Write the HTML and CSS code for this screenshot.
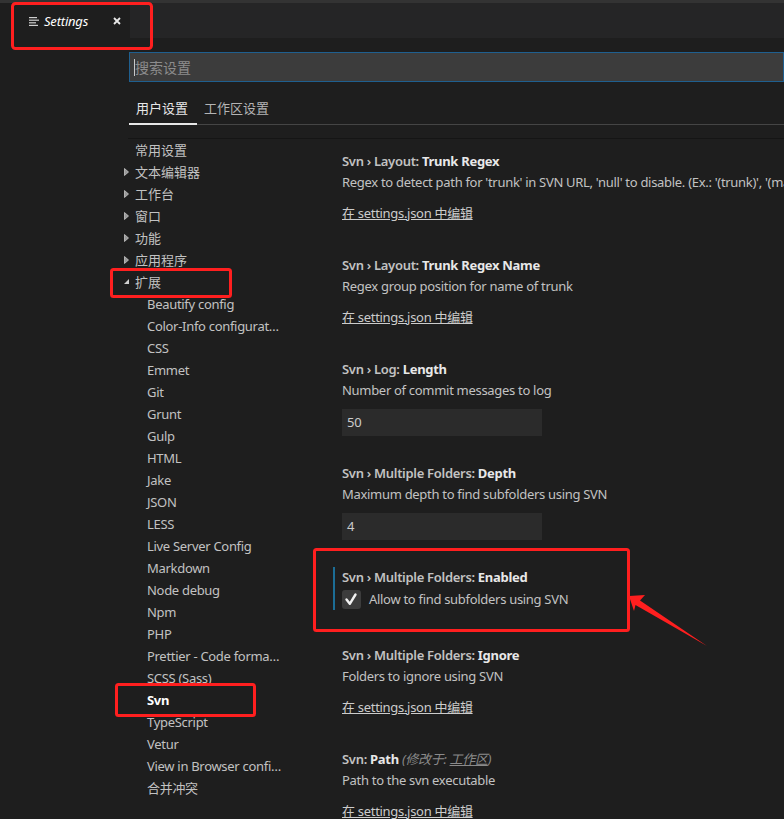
FILE: index.html
```html
<!DOCTYPE html>
<html lang="zh">
<head>
<meta charset="utf-8">
<title>Settings</title>
<link rel="stylesheet" href="styles.css">
</head>
<body>
<div class="page">
  <div class="topstrip"></div>
  <div class="tabbar">
    <div class="tab">
      <svg class="tab-icon" width="10" height="9" viewBox="0 0 10 9"><rect x="0" y="0" width="8" height="1.2" fill="#cfcfcf"/><rect x="0" y="2.6" width="10" height="1.2" fill="#cfcfcf"/><rect x="0" y="5.2" width="7" height="1.2" fill="#cfcfcf"/><rect x="0" y="7.8" width="9" height="1.2" fill="#cfcfcf"/></svg>
      <span class="tab-title">Settings</span>
      <svg class="tab-close" width="8" height="8" viewBox="0 0 8 8"><path d="M1 1 L7 7 M7 1 L1 7" stroke="#e8e8e8" stroke-width="1.8"/></svg>
    </div>
  </div>
  <div class="editor">
    <div class="header">
      <div class="search"><span class="caret"></span><span class="placeholder">搜索设置</span></div>
      <div class="scopes">
        <span class="scope active">用户设置</span>
        <span class="scope">工作区设置</span>
      </div>
    </div>
    <div class="shadow"></div>
    <div class="body">
      <ul class="tree">
        <li class="row top leaf">常用设置</li>
        <li class="row top"><svg class="chev" width="5" height="8" viewBox="0 0 5 8"><path d="M0.5 0.5 L4.5 4 L0.5 7.5 Z" fill="#9a9a9a" stroke="#c5c5c5" stroke-width="0.8"/></svg>文本编辑器</li>
        <li class="row top"><svg class="chev" width="5" height="8" viewBox="0 0 5 8"><path d="M0.5 0.5 L4.5 4 L0.5 7.5 Z" fill="#9a9a9a" stroke="#c5c5c5" stroke-width="0.8"/></svg>工作台</li>
        <li class="row top"><svg class="chev" width="5" height="8" viewBox="0 0 5 8"><path d="M0.5 0.5 L4.5 4 L0.5 7.5 Z" fill="#9a9a9a" stroke="#c5c5c5" stroke-width="0.8"/></svg>窗口</li>
        <li class="row top"><svg class="chev" width="5" height="8" viewBox="0 0 5 8"><path d="M0.5 0.5 L4.5 4 L0.5 7.5 Z" fill="#9a9a9a" stroke="#c5c5c5" stroke-width="0.8"/></svg>功能</li>
        <li class="row top"><svg class="chev" width="5" height="8" viewBox="0 0 5 8"><path d="M0.5 0.5 L4.5 4 L0.5 7.5 Z" fill="#9a9a9a" stroke="#c5c5c5" stroke-width="0.8"/></svg>应用程序</li>
        <li class="row top"><svg class="chev" width="5" height="8" viewBox="0 0 5 8"><path d="M5 1 L5 6 L0 6 Z" fill="#d0d0d0"/></svg>扩展</li>
        <li class="row child">Beautify config</li>
        <li class="row child">Color-Info configuration</li>
        <li class="row child">CSS</li>
        <li class="row child">Emmet</li>
        <li class="row child">Git</li>
        <li class="row child">Grunt</li>
        <li class="row child">Gulp</li>
        <li class="row child">HTML</li>
        <li class="row child">Jake</li>
        <li class="row child">JSON</li>
        <li class="row child">LESS</li>
        <li class="row child">Live Server Config</li>
        <li class="row child">Markdown</li>
        <li class="row child">Node debug</li>
        <li class="row child">Npm</li>
        <li class="row child">PHP</li>
        <li class="row child">Prettier - Code formatter</li>
        <li class="row child">SCSS (Sass)</li>
        <li class="row child selected">Svn</li>
        <li class="row child">TypeScript</li>
        <li class="row child">Vetur</li>
        <li class="row child">View in Browser configuration</li>
        <li class="row child">合并冲突</li>
      </ul>
      <div class="settings">
        <section class="setting">
          <div class="s-title"><span class="cat">Svn › Layout: </span><span class="key">Trunk Regex</span></div>
          <div class="s-desc">Regex to detect path for 'trunk' in SVN URL, 'null' to disable. (Ex.: '(trunk)', '(main)')</div>
          <a class="s-link">在 settings.json 中编辑</a>
        </section>
        <section class="setting">
          <div class="s-title"><span class="cat">Svn › Layout: </span><span class="key">Trunk Regex Name</span></div>
          <div class="s-desc">Regex group position for name of trunk</div>
          <a class="s-link">在 settings.json 中编辑</a>
        </section>
        <section class="setting">
          <div class="s-title"><span class="cat">Svn › Log: </span><span class="key">Length</span></div>
          <div class="s-desc">Number of commit messages to log</div>
          <div class="s-input">50</div>
        </section>
        <section class="setting">
          <div class="s-title"><span class="cat">Svn › Multiple Folders: </span><span class="key">Depth</span></div>
          <div class="s-desc">Maximum depth to find subfolders using SVN</div>
          <div class="s-input">4</div>
        </section>
        <section class="setting check-setting">
          <div class="modified">
            <div class="s-title"><span class="cat">Svn › Multiple Folders: </span><span class="key">Enabled</span></div>
            <div class="check-row">
              <span class="checkbox"><svg width="19" height="19" viewBox="0 0 19 19"><path d="M4.5 9.5 L7.8 13.8 L13.5 4.5" fill="none" stroke="#f2f2f2" stroke-width="2.4" stroke-linecap="round" stroke-linejoin="round"/></svg></span>
              <span class="s-desc">Allow to find subfolders using SVN</span>
            </div>
          </div>
        </section>
        <section class="setting">
          <div class="s-title"><span class="cat">Svn › Multiple Folders: </span><span class="key">Ignore</span></div>
          <div class="s-desc">Folders to ignore using SVN</div>
          <a class="s-link">在 settings.json 中编辑</a>
        </section>
        <section class="setting">
          <div class="s-title"><span class="cat">Svn: </span><span class="key">Path</span><span class="mod"> (修改于: <u>工作区</u>)</span></div>
          <div class="s-desc">Path to the svn executable</div>
          <a class="s-link">在 settings.json 中编辑</a>
        </section>
      </div>
    </div>
  </div>
  <svg class="annotations" width="784" height="819" viewBox="0 0 784 819">
    <g fill="none" stroke="#ff1f1f" stroke-width="3">
      <rect x="12.5" y="3.5" width="139" height="45" rx="3"/>
      <rect x="111.5" y="269.5" width="119" height="27" rx="2"/>
      <rect x="116.5" y="684.5" width="138" height="31" rx="2"/>
      <rect x="314.5" y="549.5" width="314" height="81" rx="2"/>
    </g>
    <path d="M629 596 L645 595 L640 600.5 L707 646 L635.5 605 L634 611 Z" fill="#ff1f1f"/>
  </svg>
</div>
</body>
</html>
```

FILE: styles.css
```css
* { box-sizing: border-box; }
html, body { margin: 0; padding: 0; }
body {
  background: #1e1e1e;
  font-family: "Noto Sans", "Noto Sans CJK SC", sans-serif;
  font-size: 13px;
  letter-spacing: -0.3px;
  color: #cccccc;
}
.page {
  position: relative;
  width: 784px;
  height: 819px;
  overflow: hidden;
  background: #1e1e1e;
}
.topstrip { height: 3px; background: #333333; }
.tabbar {
  height: 35px;
  background: #252526;
  display: flex;
}
.tab {
  width: 130px;
  background: #1e1e1e;
  display: flex;
  align-items: center;
  padding-left: 29px;
}
.tab-icon { flex: none; margin-top: 1px; }
.tab-title {
  font-style: italic;
  color: #ffffff;
  margin-left: 5px;
  font-size: 13px;
  letter-spacing: -0.2px;
}
.tab-close { margin-left: 25px; flex: none; }

.header { margin-left: 129px; padding-top: 14px; }
.search {
  height: 30px;
  background: #3c3c3c;
  border: 1px solid #1f5f8f;
  display: flex;
  align-items: center;
  padding-left: 4px;
}
.caret { width: 1px; height: 17px; background: #c8c8c8; }
.placeholder { color: #8c8c8c; font-size: 14px; letter-spacing: 0; }
.scopes {
  height: 43px;
  display: flex;
  align-items: flex-end;
  border-bottom: 1px solid #454545;
}
.scope {
  padding: 0 8px 5px 7px;
  line-height: 20px;
  color: #b4b4b4;
  letter-spacing: 0;
  margin-bottom: -1px;
  border-bottom: 2px solid transparent;
}
.scope.active {
  color: #e7e7e7;
  border-bottom-color: #e7e7e7;
  padding-right: 9px;
}
.shadow {
  margin-left: 128px;
  margin-top: 13px;
  height: 1px;
  background: #151515;
}
.body { display: flex; }
.tree {
  list-style: none;
  margin: 0;
  padding: 0 0 0 118px;
  width: 320px;
  flex: none;
}
.row {
  height: 22px;
  line-height: 22px;
  white-space: nowrap;
  overflow: hidden;
  text-overflow: ellipsis;
  color: #c2c2c2;
  width: 164px;
}
.row.top { padding-left: 6px; display: flex; align-items: center; letter-spacing: 0; }
.row.top.leaf { padding-left: 17px; }
.chev { flex: none; margin-right: 6px; }
.row.child { padding-left: 29px; }
.row.selected { color: #ffffff; font-weight: 700; }

.settings { flex: 1; padding-top: 12px; min-width: 0; }
.setting {
  margin-left: 13px;
  padding-left: 9px;
  padding-bottom: 31px;
  white-space: nowrap;
}
.s-title { line-height: 21px; color: #c2c2c2; }
.cat { font-weight: 600; color: #c2c2c2; }
.key { font-weight: 700; color: #e8e8e8; }
.mod { font-style: italic; color: #8a8a8a; }
.mod u { text-decoration: underline; }
.s-desc { line-height: 21px; color: #c2c2c2; }
.s-link {
  display: block;
  margin-top: 10px;
  line-height: 21px;
  color: #cccccc;
  text-decoration: underline;
}
.s-input {
  margin-top: 8px;
  width: 200px;
  height: 27px;
  background: #2b2b2b;
  line-height: 27px;
  padding-left: 5px;
  color: #cccccc;
  margin-bottom: -4px;
}
.check-setting { padding-left: 0; padding-bottom: 35px; }
.modified {
  border-left: 2px solid #1c6d95;
  padding-left: 7px;
}
.check-row { display: flex; align-items: center; height: 22px; }
.checkbox {
  width: 19px;
  height: 19px;
  background: #3c3c3c;
  border-radius: 3px;
  display: flex;
  margin-right: 8px;
}
.annotations {
  position: absolute;
  left: 0;
  top: 0;
  pointer-events: none;
}
```
